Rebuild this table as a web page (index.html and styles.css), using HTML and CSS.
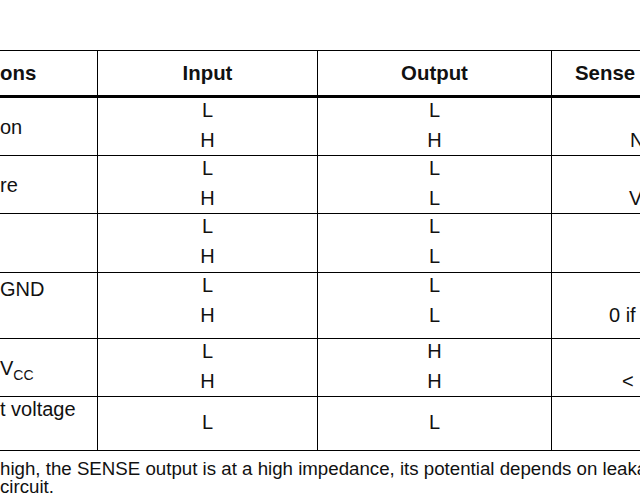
FILE: index.html
```html
<!DOCTYPE html>
<html>
<head>
<meta charset="utf-8">
<link rel="stylesheet" href="styles.css">
</head>
<body>
<div class="page">
  <table class="truth">
    <colgroup>
      <col class="c1"><col class="c2"><col class="c3"><col class="c4">
    </colgroup>
    <thead>
      <tr class="head">
        <th class="first">ons</th>
        <th>Input</th>
        <th>Output</th>
        <th class="sense">Sense</th>
      </tr>
    </thead>
    <tbody>
      <tr class="r1">
        <td class="first">on</td>
        <td class="v"><div class="pair"><div>L</div><div>H</div></div></td>
        <td class="v"><div class="pair"><div>L</div><div>H</div></div></td>
        <td class="v s"><div class="pair"><div>&nbsp;</div><div class="s-n">N</div></div></td>
      </tr>
      <tr class="r2">
        <td class="first">re</td>
        <td class="v"><div class="pair"><div>L</div><div>H</div></div></td>
        <td class="v"><div class="pair"><div>L</div><div>L</div></div></td>
        <td class="v s"><div class="pair"><div>&nbsp;</div><div class="s-v">V</div></div></td>
      </tr>
      <tr class="r3">
        <td class="first"></td>
        <td class="v"><div class="pair"><div>L</div><div>H</div></div></td>
        <td class="v"><div class="pair"><div>L</div><div>L</div></div></td>
        <td class="v s"></td>
      </tr>
      <tr class="r4">
        <td class="first gnd">GND</td>
        <td class="v"><div class="pair"><div>L</div><div>H</div></div></td>
        <td class="v"><div class="pair"><div>L</div><div>L</div></div></td>
        <td class="v s"><div class="pair"><div>&nbsp;</div><div class="s-0">0 if</div></div></td>
      </tr>
      <tr class="r5">
        <td class="first">V<sub>CC</sub></td>
        <td class="v"><div class="pair"><div>L</div><div>H</div></div></td>
        <td class="v"><div class="pair"><div>H</div><div>H</div></div></td>
        <td class="v s"><div class="pair"><div>&nbsp;</div><div class="s-lt">&lt;</div></div></td>
      </tr>
      <tr class="r6">
        <td class="first low">t voltage</td>
        <td class="one">L</td>
        <td class="one">L</td>
        <td class="s"></td>
      </tr>
    </tbody>
  </table>
  <div class="note">
    <div>high, the SENSE output is at a high impedance, its potential depends on leakage</div>
    <div>circuit.</div>
  </div>
</div>
</body>
</html>
```
FILE: styles.css
```css
html, body {
  margin: 0;
  padding: 0;
  background: #ffffff;
}
body {
  width: 640px;
  height: 504px;
  overflow: hidden;
  font-family: "Liberation Sans", Arial, sans-serif;
  color: #111111;
}
.page {
  padding-top: 50px;
}
.truth {
  border-collapse: separate;
  border-spacing: 0;
  table-layout: fixed;
  width: 852px;
  border-top: 1px solid #000;
}
.c1 { width: 98px; }
.c2 { width: 220px; }
.c3 { width: 234px; }
.c4 { width: 300px; }
.truth th,
.truth td {
  padding: 0;
  border-right: 1px solid #000;
  border-bottom: 1px solid #000;
  text-align: center;
  vertical-align: middle;
  font-size: 20px;
  line-height: 24px;
  white-space: nowrap;
  overflow: hidden;
}
.truth th {
  font-weight: bold;
  font-size: 20.4px;
  height: 44px;
  border-bottom: 3px solid #000;
}
.truth td.v {
  vertical-align: top;
}
.pair {
  height: 54px;
  display: flex;
  flex-direction: column;
  justify-content: space-between;
}
.truth .first {
  text-align: left;
}
.truth .sense {
  text-align: left;
  padding-left: 23px;
}
.truth td.s {
  text-align: left;
}
.r1 td { height: 57px; }
.r2 td { height: 57px; }
.r3 td { height: 58px; }
.r4 td { height: 65px; }
.r5 td { height: 57px; }
.r6 td { height: 53px; }
.truth td.gnd {
  vertical-align: top;
  padding-top: 4px;
  height: 61px;
}
.truth td.low {
  vertical-align: top;
}
.truth td.one {
  padding-bottom: 4px;
  height: 49px;
}
sub {
  font-size: 14px;
  vertical-align: -5px;
  line-height: 0;
}
.s-n { padding-left: 78px; }
.s-v { padding-left: 77px; }
.s-0 { padding-left: 57px; }
.s-lt { padding-left: 70px; }
.note {
  font-size: 18.7px;
  line-height: 18px;
  margin-top: 9px;
  white-space: nowrap;
  color: #111111;
}
```
